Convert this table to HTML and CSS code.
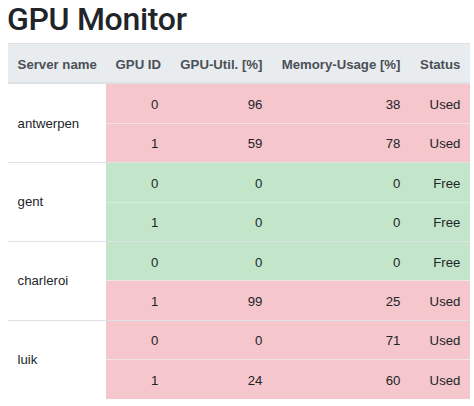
FILE: index.html
```html
<!DOCTYPE html>
<html lang="en">
<head>
<meta charset="utf-8">
<title>GPU Monitor</title>
<link rel="stylesheet" href="styles.css">
</head>
<body>
<h1 class="title">GPU Monitor</h1>
<table class="gpu-table">
  <colgroup>
    <col class="c-name"><col class="c-id"><col class="c-util"><col class="c-mem"><col class="c-status">
  </colgroup>
  <thead>
    <tr>
      <th class="left">Server name</th>
      <th>GPU ID</th>
      <th>GPU-Util. [%]</th>
      <th>Memory-Usage [%]</th>
      <th>Status</th>
    </tr>
  </thead>
  <tbody>
    <tr class="used"><td class="server" rowspan="2">antwerpen</td><td>0</td><td>96</td><td>38</td><td>Used</td></tr>
    <tr class="used inner"><td>1</td><td>59</td><td>78</td><td>Used</td></tr>
    <tr class="free"><td class="server" rowspan="2">gent</td><td>0</td><td>0</td><td>0</td><td>Free</td></tr>
    <tr class="free inner"><td>1</td><td>0</td><td>0</td><td>Free</td></tr>
    <tr class="free"><td class="server" rowspan="2">charleroi</td><td>0</td><td>0</td><td>0</td><td>Free</td></tr>
    <tr class="used inner"><td>1</td><td>99</td><td>25</td><td>Used</td></tr>
    <tr class="used"><td class="server" rowspan="2">luik</td><td>0</td><td>0</td><td>71</td><td>Used</td></tr>
    <tr class="used inner"><td>1</td><td>24</td><td>60</td><td>Used</td></tr>
  </tbody>
</table>
</body>
</html>
```
FILE: styles.css
```css
html, body {
  margin: 0;
  padding: 0;
  background: #fff;
}
body {
  padding: 0 8px;
  font-family: "Liberation Sans", Arial, sans-serif;
  color: #212529;
  font-size: 13.2px;
  line-height: 19.2px;
}
.title {
  margin: 0 0 5px -1px;
  font-family: Roboto, "Liberation Sans", sans-serif;
  font-size: 32px;
  line-height: 38px;
  font-weight: 500;
  letter-spacing: -0.3px;
  color: #212529;
}
.gpu-table {
  width: 100%;
  border-collapse: collapse;
  table-layout: fixed;
}
.c-name { width: 98px; }
.c-id { width: 62px; }
.c-util { width: 104px; }
.c-mem { width: 138px; }
.c-status { width: 60px; }
.gpu-table th,
.gpu-table td {
  padding: 10.6px 9.6px 8.6px;
  border-top: 1px solid #dee2e6;
  text-align: right;
  vertical-align: top;
  white-space: nowrap;
}
.gpu-table thead th {
  background: #e9ecef;
  color: #495057;
  font-weight: bold;
  border-bottom: 2px solid #dee2e6;
  padding: 10.6px 9.6px 8.6px;
}
.gpu-table th.left { text-align: left; }
.gpu-table td.server {
  text-align: left;
  vertical-align: middle;
  background: #fff;
  padding-top: 9.6px;
  padding-bottom: 9.6px;
}
.gpu-table tr.used td { background: #f5c6cb; }
.gpu-table tr.free td { background: #c3e6cb; }
.gpu-table tr td.server { background: #fff; }
.gpu-table tr.inner td { border-top-color: #f0e4e6; }
.gpu-table tr.free.inner td { border-top-color: #d6eedc; }
```
